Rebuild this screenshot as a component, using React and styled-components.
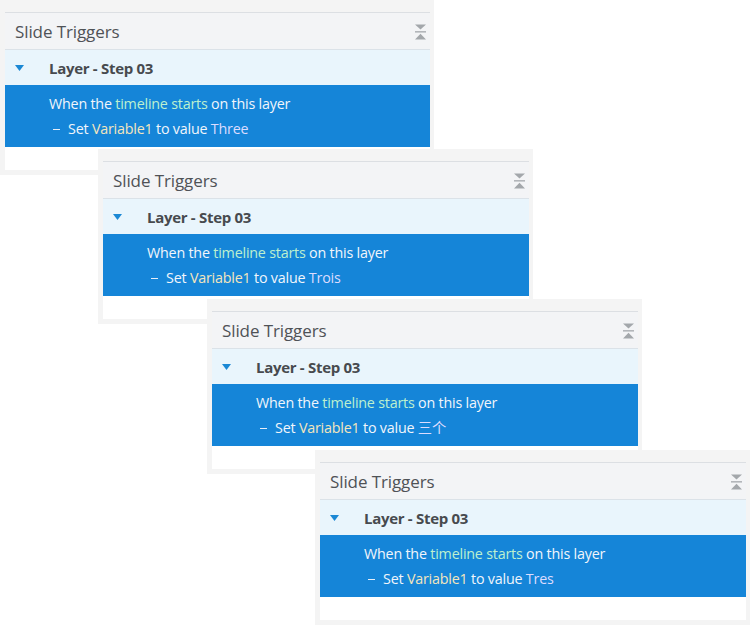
import React from "react";
import styled, { createGlobalStyle } from "styled-components";

const Global = createGlobalStyle`
  html, body { margin: 0; padding: 0; background: #ffffff; }
  body { width: 750px; height: 625px; overflow: hidden; font-family: "Open Sans", "Noto Sans", "Noto Sans CJK SC", sans-serif; }
`;

const Canvas = styled.div`
  position: relative;
  width: 750px;
  height: 625px;
  background: #ffffff;
  overflow: hidden;
`;

const Frame = styled.div`
  position: absolute;
  left: ${(p) => p.$x}px;
  top: ${(p) => p.$y}px;
  width: ${(p) => p.$w}px;
  box-sizing: border-box;
  padding: 12px 4px 5px 5px;
  background: #f4f4f4;
`;

const Window = styled.div`
  display: flex;
  flex-direction: column;
  background: #ffffff;
  border-top: 1px solid #dcdfe3;
`;

const Header = styled.div`
  height: 37px;
  box-sizing: border-box;
  display: flex;
  align-items: center;
  justify-content: space-between;
  padding: 1px 3px 0 10px;
  background: #f3f4f6;
  border-bottom: 1px solid #dbe2e8;
`;

const Title = styled.span`
  font-size: 17px;
  color: #4f5256;
  letter-spacing: -0.1px;
`;

const LayerRow = styled.div`
  height: 35px;
  display: flex;
  align-items: center;
  background: #e9f5fc;
  padding: 1px 0 0 10px;
  box-sizing: border-box;
`;

const LayerName = styled.span`
  margin-left: 25px;
  font-size: 15px;
  font-weight: 700;
  color: #474a4e;
  letter-spacing: -0.3px;
`;

const Triggers = styled.div`
  height: 62px;
  box-sizing: border-box;
  background: #1585d8;
  padding: 8px 0 0 44px;
  display: flex;
  flex-direction: column;
  gap: 3px;
`;

const Line = styled.div`
  font-size: 14.3px;
  line-height: 22px;
  color: #f1f5fb;
  letter-spacing: -0.2px;
  white-space: nowrap;
  padding-left: ${(p) => (p.$indent ? 4 : 0)}px;
`;

const Dash = styled.span`
  display: inline-block;
  width: 7px;
  height: 1px;
  background: #e6eef8;
  vertical-align: middle;
  margin: 0 8px 2px 0;
`;

const Token = styled.span`
  color: ${(p) =>
    p.$kind === "event" ? "#bdf0cf" : p.$kind === "var" ? "#f4e5bd" : "#dcdcff"};
`;

const Empty = styled.div`
  height: ${(p) => p.$h}px;
  background: #ffffff;
`;

const CollapseIcon = () => (
  <svg width="13" height="18" viewBox="0 0 13 18">
    <path d="M1 1.5 H12 L6.5 6.5 Z" fill="#a3a7ab" />
    <rect x="1" y="8.2" width="11" height="1.3" fill="#a3a7ab" />
    <path d="M6.5 10.8 L12 16.5 H1 Z" fill="#a3a7ab" />
  </svg>
);

const Caret = () => (
  <svg width="9" height="6" viewBox="0 0 9 6">
    <path d="M0 0 H9 L4.5 6 Z" fill="#1b88d4" />
  </svg>
);

const panels = [
  { x: 0, y: 0, w: 434, value: "Three", empty: 23 },
  { x: 98, y: 149, w: 435, value: "Trois", empty: 23 },
  { x: 207, y: 299, w: 435, value: "三个", empty: 23 },
  { x: 315, y: 450, w: 435, value: "Tres", empty: 23 },
];

function Panel({ x, y, w, value, empty }) {
  return (
    <Frame $x={x} $y={y} $w={w}>
      <Window>
        <Header>
          <Title>Slide Triggers</Title>
          <CollapseIcon />
        </Header>
        <LayerRow>
          <Caret />
          <LayerName>Layer - Step 03</LayerName>
        </LayerRow>
        <Triggers>
          <Line>
            When the <Token $kind="event">timeline starts</Token> on this layer
          </Line>
          <Line $indent>
            <Dash />
            Set <Token $kind="var">Variable1</Token> to value{" "}
            <Token $kind="value">{value}</Token>
          </Line>
        </Triggers>
        <Empty $h={empty} />
      </Window>
    </Frame>
  );
}

export default function App() {
  return (
    <>
      <Global />
      <Canvas>
        {panels.map((p, i) => (
          <Panel key={i} {...p} />
        ))}
      </Canvas>
    </>
  );
}
